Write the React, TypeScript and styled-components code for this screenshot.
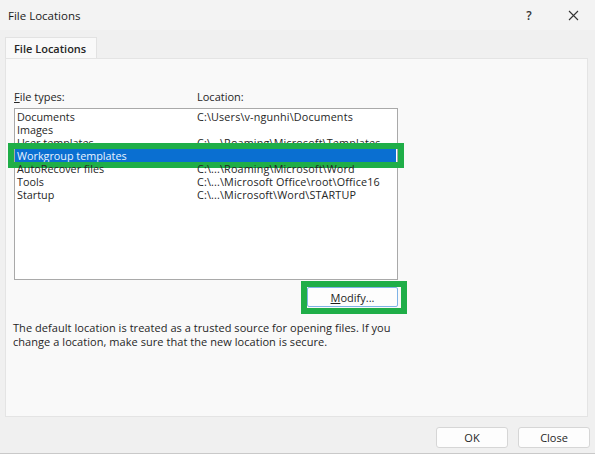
import styled, { createGlobalStyle } from "styled-components";

const GlobalStyle = createGlobalStyle`
  html, body {
    margin: 0;
    padding: 0;
    background: #ffffff;
  }
  body {
    font-family: "Open Sans", "Noto Sans", "Liberation Sans", sans-serif;
    font-size: 11px;
    color: #1b1b1b;
  }
`;

/* -------- Styled Components -------- */
const Dialog = styled.div`
  width: 595px;
  height: 453px;
  background: #f0f0f0;
  border-bottom: 1px solid #c9c9c9;
  display: flex;
  flex-direction: column;
`;
const TitleBar = styled.div`
  height: 30px;
  display: flex;
  align-items: center;
  padding-left: 8px;
  background: #f3f3f3;
`;
const Title = styled.span`
  flex: 1;
  font-size: 11.5px;
  color: #1b1b1b;
`;
const TitleButton = styled.span`
  width: 44px;
  display: flex;
  align-items: center;
  justify-content: center;
  font-size: 12px;
  font-weight: 600;
  color: #333;
`;
const TabStrip = styled.div`
  margin-top: 7px;
  padding-left: 5px;
  height: 21px;
  display: flex;
`;
const Tab = styled.div`
  width: 92px;
  background: #f9f9f9;
  border: 1px solid #e2e2e2;
  border-bottom: none;
  display: flex;
  align-items: center;
  padding-left: 8px;
  box-sizing: border-box;
  font-weight: 600;
  font-size: 11px;
  color: #262626;
`;
const Panel = styled.div`
  margin: 0 7px 0 5px;
  height: 359px;
  box-sizing: border-box;
  background: #f9f9f9;
  border: 1px solid #e4e4e4;
  padding: 31px 0 0 8px;
  display: flex;
  flex-direction: column;
`;
const Columns = styled.div`
  display: grid;
  grid-template-columns: 183px 1fr;
  width: 384px;
  line-height: 14px;
  color: #262626;
`;
const ListBox = styled.div`
  margin-top: 4px;
  width: 384px;
  height: 172px;
  box-sizing: border-box;
  background: #ffffff;
  border: 1px solid #a9a9a9;
  padding-top: 1px;
  position: relative;
`;
const Row = styled.div<{ $selected?: boolean }>`
  position: relative;
  display: grid;
  grid-template-columns: 180px 1fr;
  height: 13px;
  line-height: 13px;
  font-size: 10.8px;
  padding-left: 2px;
  margin-right: 1px;
  white-space: nowrap;
  background: ${(p) => (p.$selected ? "#0a6fd1" : "transparent")};
  color: ${(p) => (p.$selected ? "#e9f3ff" : "#262626")};
`;
const Path = styled.span`
  letter-spacing: 0.15px;
`;
const Callout = styled.span<{ $pad: string }>`
  position: absolute;
  inset: ${(p) => p.$pad};
  border: 6px solid #1fae48;
  pointer-events: none;
`;
const ActionRow = styled.div`
  width: 384px;
  display: flex;
  justify-content: flex-end;
  margin-top: 7px;
`;
const ModifyButton = styled.button`
  position: relative;
  width: 91px;
  height: 20px;
  background: #fdfdfd;
  border: 1px solid #7fb3e6;
  border-radius: 2px;
  font-family: inherit;
  font-size: 11px;
  font-weight: 500;
  color: #1e1e1e;
  padding: 0;
`;
const Note = styled.p`
  margin: 14px 0 0 -1px;
  line-height: 14px;
  letter-spacing: 0.05px;
  color: #262626;
`;
const Footer = styled.div`
  flex: 1;
  display: flex;
  justify-content: flex-end;
  align-items: flex-start;
  gap: 10px;
  padding: 10px 5px 0 0;
`;
const FooterButton = styled.button`
  width: 72px;
  height: 21px;
  background: #fdfdfd;
  border: 1px solid #d6d6d6;
  border-radius: 3px;
  font-family: inherit;
  font-size: 11px;
  color: #262626;
  padding: 0;
`;

const rows = [
  { name: "Documents", path: "C:\\Users\\v-ngunhi\\Documents" },
  { name: "Images", path: "" },
  { name: "User templates", path: "C:\\...\\Roaming\\Microsoft\\Templates" },
  { name: "Workgroup templates", path: "", selected: true },
  { name: "AutoRecover files", path: "C:\\...\\Roaming\\Microsoft\\Word" },
  { name: "Tools", path: "C:\\...\\Microsoft Office\\root\\Office16" },
  { name: "Startup", path: "C:\\...\\Microsoft\\Word\\STARTUP" },
];

export default function App() {
  return (
    <>
      <GlobalStyle />
      <Dialog>
        <TitleBar>
          <Title>File Locations</Title>
          <TitleButton>?</TitleButton>
          <TitleButton>
            <svg width="11" height="11" viewBox="0 0 11 11">
              <path d="M1 1L10 10M10 1L1 10" stroke="#333" strokeWidth="1.1" />
            </svg>
          </TitleButton>
        </TitleBar>
        <TabStrip>
          <Tab>File Locations</Tab>
        </TabStrip>
        <Panel>
          <Columns>
            <span>
              <u>F</u>ile types:
            </span>
            <span>Location:</span>
          </Columns>
          <ListBox>
            {rows.map((r) => (
              <Row key={r.name} $selected={r.selected}>
                <span>{r.name}</span>
                <Path>{r.path}</Path>
                {r.selected && <Callout $pad="-6px -8px -6px -7px" />}
              </Row>
            ))}
          </ListBox>
          <ActionRow>
            <ModifyButton>
              <u>M</u>odify...
              <Callout $pad="-7px -10px -8px -7px" />
            </ModifyButton>
          </ActionRow>
          <Note>
            The default location is treated as a trusted source for opening files. If you
            <br />
            change a location, make sure that the new location is secure.
          </Note>
        </Panel>
        <Footer>
          <FooterButton>OK</FooterButton>
          <FooterButton>Close</FooterButton>
        </Footer>
      </Dialog>
    </>
  );
}
